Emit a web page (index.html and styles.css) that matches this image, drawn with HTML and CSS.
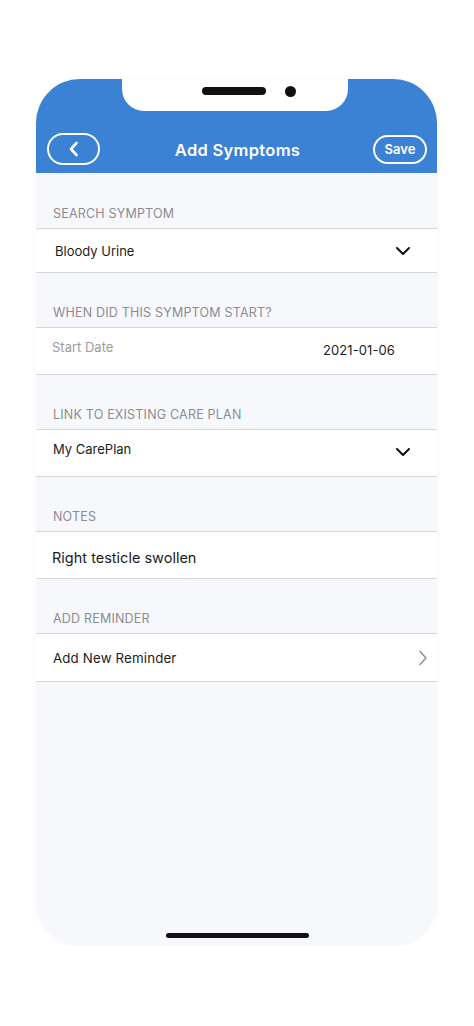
FILE: index.html
```html
<!DOCTYPE html>
<html lang="en">
<head>
<meta charset="utf-8">
<title>Add Symptoms</title>
<link rel="stylesheet" href="styles.css">
</head>
<body>
<div class="phone">
  <header class="header">
    <div class="notch">
      <span class="speaker"></span>
      <span class="camera"></span>
    </div>
    <div class="nav">
      <button class="btn-back" aria-label="Back">
        <svg width="12" height="16" viewBox="0 0 12 16"><path d="M8.5 2 L3 8 L8.5 14" fill="none" stroke="#fff" stroke-width="2.6" stroke-linecap="round" stroke-linejoin="round"/></svg>
      </button>
      <h1 class="title">Add Symptoms</h1>
      <button class="btn-save">Save</button>
    </div>
  </header>

  <main class="content">
    <div class="label first">SEARCH SYMPTOM</div>
    <div class="row row-first">
      <span class="value">Bloody Urine</span>
      <svg class="chev-down" width="16" height="10" viewBox="0 0 16 10"><path d="M2 2 L8 8 L14 2" fill="none" stroke="#111" stroke-width="2" stroke-linecap="round" stroke-linejoin="round"/></svg>
    </div>

    <div class="label">WHEN DID THIS SYMPTOM START?</div>
    <div class="row row-date">
      <span class="placeholder">Start Date</span>
      <span class="date">2021-01-06</span>
    </div>

    <div class="label">LINK TO EXISTING CARE PLAN</div>
    <div class="row row-plan">
      <span class="value plan">My CarePlan</span>
      <svg class="chev-down" width="16" height="10" viewBox="0 0 16 10"><path d="M2 2 L8 8 L14 2" fill="none" stroke="#111" stroke-width="2" stroke-linecap="round" stroke-linejoin="round"/></svg>
    </div>

    <div class="label">NOTES</div>
    <div class="row row-notes">
      <span class="notes">Right testicle swollen</span>
    </div>

    <div class="label">ADD REMINDER</div>
    <div class="row row-rem">
      <span class="value rem">Add New Reminder</span>
      <svg class="chev-right" width="10" height="16" viewBox="0 0 10 16"><path d="M2 1.5 L8 8 L2 14.5" fill="none" stroke="#8a8a8e" stroke-width="1.4" stroke-linecap="round" stroke-linejoin="round"/></svg>
    </div>

    <div class="spacer"></div>
    <div class="home-indicator"></div>
  </main>
</div>
</body>
</html>
```

FILE: styles.css
```css
* { box-sizing: border-box; }

html, body {
  margin: 0;
  padding: 0;
  background: #ffffff;
}

body {
  font-family: "Inter", "Liberation Sans", sans-serif;
  padding-top: 79px;
}

.phone {
  position: relative;
  width: 401px;
  height: 867px;
  margin-left: 36px;
  border-radius: 44px;
  overflow: hidden;
  background: #f7f8fc;
  display: flex;
  flex-direction: column;
  box-shadow: 0 0 6px rgba(0, 0, 0, 0.03);
}

.header {
  position: relative;
  height: 94px;
  background: #3b82d5;
  display: flex;
  flex-direction: column;
  justify-content: flex-end;
}

.notch {
  position: absolute;
  top: 0;
  left: 86px;
  width: 226px;
  height: 32px;
  background: #ffffff;
  border-radius: 0 0 22px 22px;
}

.speaker {
  position: absolute;
  left: 80px;
  top: 8px;
  width: 64px;
  height: 8px;
  border-radius: 4px;
  background: #111111;
}

.camera {
  position: absolute;
  left: 163px;
  top: 7px;
  width: 11px;
  height: 11px;
  border-radius: 50%;
  background: #111111;
}

.nav {
  display: flex;
  align-items: center;
  justify-content: space-between;
  padding: 0 10px 8px 11px;
  height: 40px;
}

.btn-back {
  width: 53px;
  height: 32px;
  border: 2px solid #ffffff;
  border-radius: 16px;
  background: transparent;
  display: flex;
  align-items: center;
  justify-content: center;
  padding: 0;
}

.btn-save {
  width: 54px;
  height: 29px;
  border: 2px solid #ffffff;
  border-radius: 15px;
  background: transparent;
  color: #ffffff;
  font-family: "Inter", sans-serif;
  font-weight: 600;
  font-size: 13px;
  padding: 0;
}

.title {
  margin: 0;
  color: #ffffff;
  font-size: 16.5px;
  font-weight: 600;
  letter-spacing: 0.3px;
  padding-left: 2px;
  margin-top: 2px;
}

.content {
  flex: 1;
  display: flex;
  flex-direction: column;
}

.label {
  height: 55px;
  display: flex;
  align-items: flex-end;
  padding: 0 17px 7px;
  font-size: 12.5px;
  line-height: 14px;
  color: #8c8c91;
  letter-spacing: 0.2px;
  border-bottom: 1px solid #d6d6db;
}

.label.first {
  height: 56px;
}

.row {
  background: #ffffff;
  display: flex;
  align-items: center;
  justify-content: space-between;
  padding: 0 17px;
  height: 47px;
  border-bottom: 1.5px solid #d6d6db;
}

.row-first {
  height: 44px;
}

.row-rem {
  height: 48px;
}

.value {
  font-size: 13px;
  color: #1c1c1e;
  padding-left: 2px;
}

.value.plan {
  padding-left: 0;
  margin-top: -8px;
}

.value.rem {
  padding-left: 0;
  font-size: 13.3px;
  letter-spacing: 0.15px;
}

.row-plan .chev-down {
  margin-right: 9px;
  margin-top: -3px;
}

.chev-down {
  margin-right: 9px;
}

.row-date {
  align-items: flex-start;
  padding-top: 11px;
}

.placeholder {
  font-size: 13px;
  color: #9a9a9f;
  margin-left: -1px;
}

.date {
  font-size: 13px;
  color: #1c1c1e;
  margin-top: 3px;
  margin-right: 25px;
  letter-spacing: 0.1px;
}

.notes {
  font-size: 14.5px;
  color: #1c1c1e;
  margin-left: -1px;
  margin-top: 5px;
}

.chev-right {
  margin-right: -8px;
}

.spacer {
  flex: 1;
}

.home-indicator {
  align-self: center;
  width: 143px;
  height: 5px;
  border-radius: 3px;
  background: #111111;
  margin-bottom: 8px;
  margin-left: 1px;
}
```
